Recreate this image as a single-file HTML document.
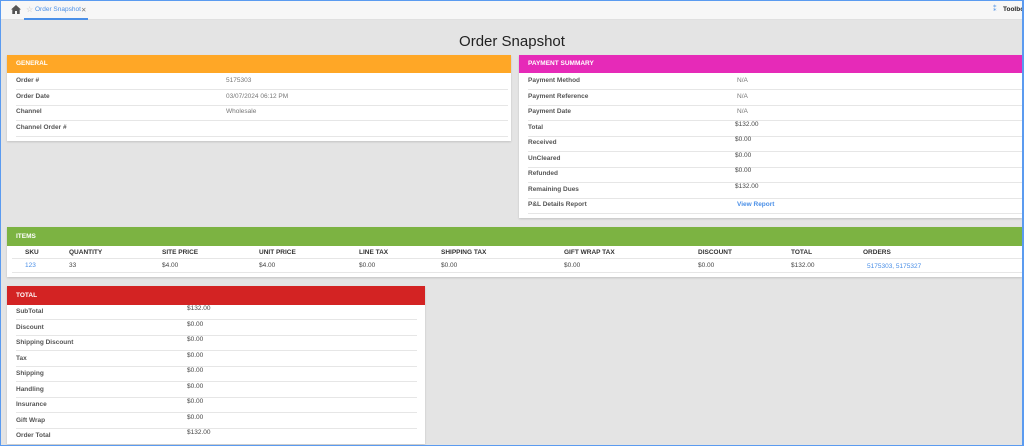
<!DOCTYPE html>
<html><head><meta charset="utf-8"><style>
*{margin:0;padding:0;box-sizing:border-box}
body{width:1024px;height:446px;background:#e4e4e4;font-family:"Liberation Sans",Arial,sans-serif;position:relative;overflow:hidden;color:#444}
.frame{position:absolute;left:0;top:0;width:1024px;height:446px;border:1px solid #5b9bf0;border-right-width:2px;z-index:9;pointer-events:none}
.top{position:absolute;left:0;top:0;width:1024px;height:20px;background:#f7f7f7;border-bottom:1px solid #e0e0e0}
.card{position:absolute;background:#fff;box-shadow:0 1px 2px rgba(0,0,0,.15)}
.hd{position:absolute;left:0;top:0;right:0;color:#fff;font-size:6.5px;font-weight:bold;padding-left:9px}
.t{position:absolute;font-size:6.5px;white-space:nowrap}
.b{font-weight:bold;color:#555}
.v{color:#777}
.ln{position:absolute;height:1px;background:#e6e6e6}
.lk{color:#4a8fe7}
</style></head><body>
<div class="top">
<svg style="position:absolute;left:11px;top:5px" width="10" height="9" viewBox="0 0 10 9"><path d="M5 0L0 4.5h1.3V9h2.7V6h2v3h2.7V4.5H10z" fill="#555"/></svg>
<span class="t" style="left:26px;top:5px;color:#bbb;font-size:8px">☆</span>
<span class="t" style="left:35px;top:6px;color:#4a8fe7">Order Snapshot</span>
<span class="t" style="left:81px;top:6px;color:#777">✕</span>
<div style="position:absolute;left:24px;top:18px;width:64px;height:2px;background:#4a8fe7"></div>
<span class="t" style="left:993px;top:5px;color:#4a8fe7;font-size:7px">⁑</span>
<span class="t b" style="left:1003px;top:6px;color:#222">Toolbox</span>
</div>
<div class="t" style="left:0;width:1024px;text-align:center;top:33px;font-size:15px;color:#222">Order Snapshot</div>

<div class="card" style="left:7px;top:55px;width:504px;height:86px">
<div class="hd" style="background:#ffa726;height:18px;line-height:18px">GENERAL</div>
<span class="t b" style="left:9px;top:22px">Order #</span><span class="t v" style="left:219px;top:22px">5175303</span><div class="ln" style="left:9px;width:492px;top:34px"></div>
<span class="t b" style="left:9px;top:38px">Order Date</span><span class="t v" style="left:219px;top:38px">03/07/2024 06:12 PM</span><div class="ln" style="left:9px;width:492px;top:50px"></div>
<span class="t b" style="left:9px;top:53px">Channel</span><span class="t v" style="left:219px;top:53px">Wholesale</span><div class="ln" style="left:9px;width:492px;top:65px"></div>
<span class="t b" style="left:9px;top:69px">Channel Order #</span><div class="ln" style="left:9px;width:492px;top:81px"></div>
</div>

<div class="card" style="left:519px;top:55px;width:503px;height:163px">
<div class="hd" style="background:#e62ab8;height:18px;line-height:18px">PAYMENT SUMMARY</div>
<span class="t b" style="left:9px;top:22px">Payment Method</span><span class="t v" style="left:218px;top:22px">N/A</span><div class="ln" style="left:9px;width:494px;top:34px"></div>
<span class="t b" style="left:9px;top:38px">Payment Reference</span><span class="t v" style="left:218px;top:38px">N/A</span><div class="ln" style="left:9px;width:494px;top:50px"></div>
<span class="t b" style="left:9px;top:53px">Payment Date</span><span class="t v" style="left:218px;top:53px">N/A</span><div class="ln" style="left:9px;width:494px;top:65px"></div>
<span class="t b" style="left:9px;top:69px">Total</span><span class="t" style="left:216px;top:66px">$132.00</span><div class="ln" style="left:9px;width:494px;top:81px"></div>
<span class="t b" style="left:9px;top:84px">Received</span><span class="t" style="left:216px;top:81px">$0.00</span><div class="ln" style="left:9px;width:494px;top:96px"></div>
<span class="t b" style="left:9px;top:100px">UnCleared</span><span class="t" style="left:216px;top:97px">$0.00</span><div class="ln" style="left:9px;width:494px;top:112px"></div>
<span class="t b" style="left:9px;top:115px">Refunded</span><span class="t" style="left:216px;top:112px">$0.00</span><div class="ln" style="left:9px;width:494px;top:127px"></div>
<span class="t b" style="left:9px;top:131px">Remaining Dues</span><span class="t" style="left:216px;top:128px">$132.00</span><div class="ln" style="left:9px;width:494px;top:143px"></div>
<span class="t b" style="left:9px;top:146px">P&amp;L Details Report</span><span class="t lk b" style="left:218px;top:146px">View Report</span><div class="ln" style="left:9px;width:494px;top:158px"></div>
</div>

<div class="card" style="left:7px;top:227px;width:1015px;height:50px">
<div class="hd" style="background:#7cb342;height:19px;line-height:19px;padding-left:9px">ITEMS</div>
<span class="t b" style="left:18px;top:22px;color:#333">SKU</span>
<span class="t b" style="left:62px;top:22px;color:#333">QUANTITY</span>
<span class="t b" style="left:155px;top:22px;color:#333">SITE PRICE</span>
<span class="t b" style="left:252px;top:22px;color:#333">UNIT PRICE</span>
<span class="t b" style="left:352px;top:22px;color:#333">LINE TAX</span>
<span class="t b" style="left:434px;top:22px;color:#333">SHIPPING TAX</span>
<span class="t b" style="left:557px;top:22px;color:#333">GIFT WRAP TAX</span>
<span class="t b" style="left:691px;top:22px;color:#333">DISCOUNT</span>
<span class="t b" style="left:784px;top:22px;color:#333">TOTAL</span>
<span class="t b" style="left:856px;top:22px;color:#333">ORDERS</span>
<div class="ln" style="left:5px;width:1010px;top:31px"></div>
<span class="t lk" style="left:18px;top:35px">123</span>
<span class="t" style="left:62px;top:35px">33</span>
<span class="t" style="left:155px;top:35px">$4.00</span>
<span class="t" style="left:252px;top:35px">$4.00</span>
<span class="t" style="left:352px;top:35px">$0.00</span>
<span class="t" style="left:434px;top:35px">$0.00</span>
<span class="t" style="left:557px;top:35px">$0.00</span>
<span class="t" style="left:691px;top:35px">$0.00</span>
<span class="t" style="left:784px;top:35px">$132.00</span>
<span class="t lk" style="left:860px;top:36px">5175303, 5175327</span>
<div class="ln" style="left:5px;width:1010px;top:45px"></div>
</div>

<div class="card" style="left:7px;top:286px;width:418px;height:158px">
<div class="hd" style="background:#d32323;height:19px;line-height:19px;padding-left:9px">TOTAL</div>
<span class="t b" style="left:9px;top:22px">SubTotal</span><span class="t" style="left:180px;top:19px">$132.00</span><div class="ln" style="left:9px;width:401px;top:33px"></div>
<span class="t b" style="left:9px;top:38px">Discount</span><span class="t" style="left:180px;top:35px">$0.00</span><div class="ln" style="left:9px;width:401px;top:49px"></div>
<span class="t b" style="left:9px;top:53px">Shipping Discount</span><span class="t" style="left:180px;top:50px">$0.00</span><div class="ln" style="left:9px;width:401px;top:64px"></div>
<span class="t b" style="left:9px;top:69px">Tax</span><span class="t" style="left:180px;top:66px">$0.00</span><div class="ln" style="left:9px;width:401px;top:80px"></div>
<span class="t b" style="left:9px;top:84px">Shipping</span><span class="t" style="left:180px;top:81px">$0.00</span><div class="ln" style="left:9px;width:401px;top:95px"></div>
<span class="t b" style="left:9px;top:100px">Handling</span><span class="t" style="left:180px;top:97px">$0.00</span><div class="ln" style="left:9px;width:401px;top:111px"></div>
<span class="t b" style="left:9px;top:115px">Insurance</span><span class="t" style="left:180px;top:112px">$0.00</span><div class="ln" style="left:9px;width:401px;top:126px"></div>
<span class="t b" style="left:9px;top:131px">Gift Wrap</span><span class="t" style="left:180px;top:128px">$0.00</span><div class="ln" style="left:9px;width:401px;top:142px"></div>
<span class="t b" style="left:9px;top:146px">Order Total</span><span class="t" style="left:180px;top:143px">$132.00</span>
</div>
<div class="frame"></div>
</body></html>
